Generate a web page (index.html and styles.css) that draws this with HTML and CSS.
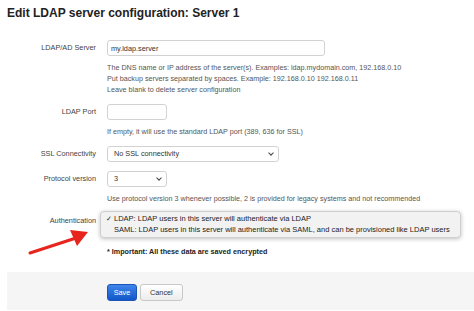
FILE: index.html
```html
<!DOCTYPE html>
<html lang="en">
<head>
  <meta charset="UTF-8">
  <meta name="viewport" content="width=device-width, initial-scale=1.0">
  <title>Edit LDAP server configuration</title>
  <link rel="stylesheet" href="styles.css">
</head>
<body>

<div class="page">
  <h2 class="title">Edit LDAP server configuration: Server 1</h2>

  <form class="form">
    <div class="row">
      <label class="label">LDAP/AD Server</label>
      <div class="field">
        <input class="input input-wide" type="text" value="my.ldap.server">
        <p class="help">The DNS name or IP address of the server(s). Examples: ldap.mydomain.com, 192.168.0.10<br>
          Put backup servers separated by spaces. Example: 192.168.0.10 192.168.0.11<br>
          Leave blank to delete server configuration</p>
      </div>
    </div>

    <div class="row">
      <label class="label">LDAP Port</label>
      <div class="field">
        <input class="input input-small" type="text" value="">
        <p class="help">If empty, it will use the standard LDAP port (389, 636 for SSL)</p>
      </div>
    </div>

    <div class="row">
      <label class="label">SSL Connectivity</label>
      <div class="field">
        <div class="select select-wide">No SSL connectivity</div>
      </div>
    </div>

    <div class="row">
      <label class="label">Protocol version</label>
      <div class="field">
        <div class="select select-small">3</div>
        <p class="help">Use protocol version 3 whenever possible, 2 is provided for legacy systems and not recommended</p>
      </div>
    </div>

    <div class="row row-auth">
      <label class="label">Authentication</label>
      <div class="field">
        <ul class="dropdown">
          <li class="option selected">LDAP: LDAP users in this server will authenticate via LDAP</li>
          <li class="option">SAML: LDAP users in this server will authenticate via SAML, and can be provisioned like LDAP users</li>
        </ul>
        <p class="important">* Important: All these data are saved encrypted</p>
      </div>
    </div>

    <div class="footer">
      <button type="button" class="btn btn-primary">Save</button>
      <button type="button" class="btn">Cancel</button>
    </div>
  </form>

  <svg class="arrow" width="70" height="30" viewBox="0 0 70 30">
    <line x1="2" y1="27" x2="48" y2="12" stroke="#e8251d" stroke-width="3" stroke-linecap="round"/>
    <polygon points="60,6 42,4 49,20" fill="#e8251d"/>
  </svg>
</div>

</body>
</html>
```

FILE: styles.css
```css
body {
  margin: 0;
  font-family: "Liberation Sans", Arial, Helvetica, sans-serif;
  background-color: #fff;
  color: #333;
}

.page {
  position: relative;
  padding-left: 7px;
}

.title {
  margin: 0;
  padding-top: 6px;
  font-size: 12px;
  line-height: 14px;
  color: #222;
}

.form {
  margin-top: 20px;
}

.row {
  display: grid;
  grid-template-columns: 89px 1fr;
  column-gap: 11px;
  margin-bottom: 9px;
}

.label {
  text-align: right;
  font-size: 7.3px;
  line-height: 16px;
  color: #444;
}

.field {
  display: flex;
  flex-direction: column;
  align-items: flex-start;
}

.input {
  box-sizing: border-box;
  height: 16px;
  padding: 0 3px;
  border: 1px solid #d2d2d2;
  border-radius: 3px;
  font-family: inherit;
  font-size: 7.3px;
  color: #333;
  outline: none;
}

.input-wide {
  width: 218px;
}

.input-small {
  width: 60px;
}

.select {
  box-sizing: border-box;
  height: 16px;
  padding: 0 6px;
  border: 1px solid #d2d2d2;
  border-radius: 3px;
  font-size: 7.3px;
  line-height: 14px;
  color: #333;
  background: #fff;
  position: relative;
}

.select::after {
  content: "";
  position: absolute;
  right: 5px;
  top: 4px;
  width: 3px;
  height: 3px;
  border-right: 1.2px solid #444;
  border-bottom: 1.2px solid #444;
  transform: rotate(45deg);
}

.select-wide {
  width: 172px;
}

.select-small {
  width: 60px;
}

.help {
  margin: 6px 0 0;
  font-size: 7.2px;
  line-height: 11px;
  color: #555;
}

.dropdown {
  list-style: none;
  margin: -2px 0 0 -7px;
  padding: 1px 10px 2px 13px;
  width: 336px;
  border: 1px solid #cfcfcf;
  border-radius: 4px;
  background: #f2f2f2;
  box-shadow: 0 1px 4px rgba(0, 0, 0, 0.25);
}

.option {
  position: relative;
  font-size: 7.5px;
  line-height: 11px;
  color: #222;
}

.option.selected::before {
  content: "\2713";
  position: absolute;
  left: -8px;
  font-size: 7px;
}

.important {
  margin: 8px 0 0;
  font-size: 7.2px;
  line-height: 11px;
  font-weight: bold;
  color: #222;
}

.footer {
  margin-top: 15px;
  padding: 12px 0 9px 100px;
  background-color: #f5f5f5;
  display: flex;
  gap: 3px;
}

.btn {
  height: 17px;
  padding: 0 9px;
  border: 1px solid #c8c8c8;
  border-radius: 3px;
  background: linear-gradient(#ffffff, #ececec);
  font-family: inherit;
  font-size: 7.3px;
  color: #333;
}

.btn-primary {
  width: 30px;
  padding: 0;
  border-color: #1b55b8;
  background: linear-gradient(#3f85ea, #1257c8);
  color: #fff;
}

.arrow {
  position: absolute;
  left: 28px;
  top: 226px;
}
```
